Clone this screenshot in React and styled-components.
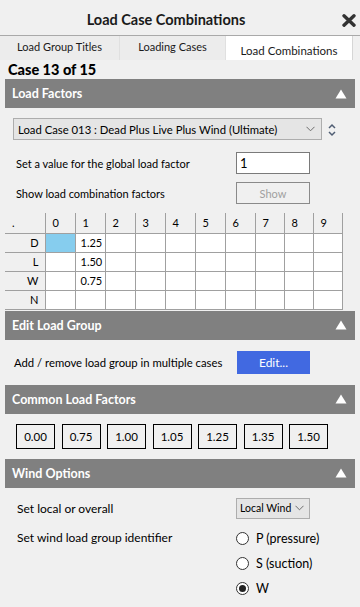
import React from 'react';
import styled, { createGlobalStyle } from 'styled-components';

const GlobalStyle = createGlobalStyle`
  html, body {
    margin: 0;
    padding: 0;
    background: #f0f0f0;
  }
  * {
    box-sizing: border-box;
  }
`;

const columns = ['0', '1', '2', '3', '4', '5', '6', '7', '8', '9'];
const colWidths = [30, 30, 30, 30, 30, 30, 30, 29, 29, 29];
const rows = [
  { name: 'D', values: { 1: '1.25' }, selected: 0 },
  { name: 'L', values: { 1: '1.50' } },
  { name: 'W', values: { 1: '0.75' } },
  { name: 'N', values: {} },
];
const commonFactors = ['0.00', '0.75', '1.00', '1.05', '1.25', '1.35', '1.50'];

function Chevron() {
  return (
    <svg width="9" height="6" viewBox="0 0 9 6">
      <path d="M0.5 0.8 L4.5 4.8 L8.5 0.8" fill="none" stroke="#6d6d6d" strokeWidth="1" />
    </svg>
  );
}

function Section({ title }) {
  return (
    <SectionHeader>
      {title}
      <svg width="12" height="10" viewBox="0 0 12 10">
        <path d="M6 0.5 L11.5 9.5 L0.5 9.5 Z" fill="#fff" />
      </svg>
    </SectionHeader>
  );
}

function App() {
  return (
    <Window>
      <GlobalStyle />
      <TitleBar>
        <Title>Load Case Combinations</Title>
        <CloseButton>
          <svg width="14" height="13" viewBox="0 0 14 13">
            <path d="M2 1.8 L12 11.2 M12 1.8 L2 11.2" stroke="#333" strokeWidth="3.4" strokeLinecap="round" />
          </svg>
        </CloseButton>
      </TitleBar>

      <TabBar>
        <Tab $width={120}>Load Group Titles</Tab>
        <Tab $width={106}>Loading Cases</Tab>
        <Tab $width={126} $active>Load Combinations</Tab>
        <TabScroll />
      </TabBar>

      <CaseLabel>Case 13 of 15</CaseLabel>

      <Section title="Load Factors" />
      <LoadFactorsBody>
        <SelectRow>
          <CaseSelect>
            <span>Load Case 013 : Dead Plus Live Plus Wind (Ultimate)</span>
            <Chevron />
          </CaseSelect>
          <Spinner>
            <svg width="8" height="14" viewBox="0 0 8 14">
              <path d="M1 5 L4 2 L7 5" fill="none" stroke="#4f5d73" strokeWidth="1.5" />
              <path d="M1 9 L4 12 L7 9" fill="none" stroke="#4f5d73" strokeWidth="1.5" />
            </svg>
          </Spinner>
        </SelectRow>
        <FieldRow $first>
          <Label>Set a value for the global load factor</Label>
          <ValueInput>1</ValueInput>
        </FieldRow>
        <FieldRow>
          <Label>Show load combination factors</Label>
          <DisabledButton>Show</DisabledButton>
        </FieldRow>
      </LoadFactorsBody>

      <Grid>
        <colgroup>
          <col style={{ width: 40 }} />
          {colWidths.map((w, i) => (
            <col key={i} style={{ width: w }} />
          ))}
        </colgroup>
        <thead>
          <tr>
            <HeadCell>.</HeadCell>
            {columns.map((c) => (
              <HeadCell key={c}>{c}</HeadCell>
            ))}
          </tr>
        </thead>
        <tbody>
          {rows.map((r) => (
            <tr key={r.name}>
              <RowHead>{r.name}</RowHead>
              {columns.map((c, i) => (
                <Cell key={c} $selected={r.selected === i}>
                  {r.values[i] || ''}
                </Cell>
              ))}
            </tr>
          ))}
        </tbody>
      </Grid>

      <Section title="Edit Load Group" />
      <EditBody>
        <Label>Add / remove load group in multiple cases</Label>
        <PrimaryButton>Edit...</PrimaryButton>
      </EditBody>

      <Section title="Common Load Factors" />
      <FactorBody>
        {commonFactors.map((f) => (
          <FactorButton key={f}>{f}</FactorButton>
        ))}
      </FactorBody>

      <Section title="Wind Options" />
      <WindBody>
        <WindRow>
          <Label>Set local or overall</Label>
          <SmallSelect>
            <span>Local Wind</span>
            <Chevron />
          </SmallSelect>
        </WindRow>
        <WindRow $top>
          <Label>Set wind load group identifier</Label>
          <RadioGroup>
            <RadioItem>
              <Radio />
              P (pressure)
            </RadioItem>
            <RadioItem>
              <Radio />
              S (suction)
            </RadioItem>
            <RadioItem>
              <Radio $checked />
              W
            </RadioItem>
          </RadioGroup>
        </WindRow>
      </WindBody>
    </Window>
  );
}

const Window = styled.div`
  width: 360px;
  height: 607px;
  overflow: hidden;
  background: #f0f0f0;
  font-family: 'Segoe UI', Lato, 'Open Sans', sans-serif;
  font-size: 11px;
  color: #000;
  display: flex;
  flex-direction: column;
`;

const TitleBar = styled.div`
  height: 36px;
  display: flex;
  align-items: center;
  justify-content: center;
  position: relative;
  border-bottom: 1px solid #a9a9a9;
`;

const Title = styled.div`
  font-size: 14.5px;
  font-weight: 700;
  color: #1a1a1a;
  margin-right: 28px;
  margin-top: 4px;
`;

const CloseButton = styled.div`
  position: absolute;
  right: 4px;
  top: 14px;
  display: flex;
`;

const TabBar = styled.div`
  height: 24px;
  display: flex;
`;

const Tab = styled.div`
  width: ${(p) => p.$width}px;
  display: flex;
  justify-content: center;
  align-items: ${(p) => (p.$active ? 'flex-end' : 'center')};
  padding-bottom: 3px;
  background: ${(p) => (p.$active ? '#ffffff' : '#ececec')};
  border-right: ${(p) => (p.$active ? 'none' : '1px solid #e0e0e0')};
  color: #1a1a1a;
  font-size: ${(p) => (p.$active ? '11.5px' : '11px')};
`;

const TabScroll = styled.div`
  flex: 1;
  border-left: 1px solid #d6d6d6;
  background: #f0f0f0;
`;

const CaseLabel = styled.div`
  height: 19px;
  padding-left: 8px;
  font-size: 14.5px;
  font-weight: 900;
  line-height: 19px;
`;

const SectionHeader = styled.div`
  margin: 0 5px;
  height: 29px;
  flex-shrink: 0;
  background: #808080;
  color: #fff;
  font-weight: 700;
  font-size: 12.5px;
  display: flex;
  align-items: center;
  justify-content: space-between;
  padding: 0 8px 0 7px;
`;

const LoadFactorsBody = styled.div`
  padding: 10px 0 0 13px;
  display: flex;
  flex-direction: column;
`;

const SelectRow = styled.div`
  display: flex;
  align-items: center;
  gap: 6px;
`;

const CaseSelect = styled.div`
  width: 309px;
  height: 22px;
  background: #e5e5e5;
  border: 1px solid #adadad;
  display: flex;
  align-items: center;
  justify-content: space-between;
  padding: 0 6px 0 4px;
  white-space: nowrap;
  font-size: 11.3px;
`;

const Spinner = styled.div`
  display: flex;
  padding-top: 1px;
`;

const FieldRow = styled.div`
  display: flex;
  align-items: center;
  justify-content: space-between;
  width: 297px;
  margin-top: ${(p) => (p.$first ? '12px' : '8px')};
  padding-left: 3px;
  height: 22px;
`;

const Label = styled.div`
  white-space: nowrap;
`;

const ValueInput = styled.div`
  width: 74px;
  height: 22px;
  background: #fff;
  border: 1px solid #7a7a7a;
  padding-left: 3px;
  font-size: 13px;
  line-height: 20px;
`;

const DisabledButton = styled.div`
  width: 74px;
  height: 22px;
  border: 1px solid #8a8a8a;
  background: #f0f0f0;
  color: #a0a0a0;
  display: flex;
  align-items: center;
  justify-content: center;
`;

const Grid = styled.table`
  margin: 9px 0 0 5px;
  border-collapse: collapse;
  table-layout: fixed;
  width: 337px;
  flex-shrink: 0;
  margin-bottom: 1px;
  td, th {
    border: 1px solid #a0a0a0;
    height: 19px;
    padding: 0 0 0 5px;
    font-weight: 400;
    text-align: left;
    white-space: nowrap;
  }
`;

const HeadCell = styled.th`
  background: #f0f0f0;
  && {
    height: 20px;
    padding-left: 7px;
    border-top: none;
    border-left: none;
  }
`;

const RowHead = styled.td`
  background: #f0f0f0;
  && {
    text-align: right;
    padding: 0 6px 0 0;
    border-left: none;
  }
`;

const Cell = styled.td`
  background: ${(p) => (p.$selected ? '#86cdee' : '#fff')};
`;

const EditBody = styled.div`
  height: 45px;
  width: 310px;
  display: flex;
  align-items: center;
  justify-content: space-between;
  padding-left: 14px;
  font-size: 11.3px;
`;

const PrimaryButton = styled.div`
  width: 73px;
  height: 23px;
  background: #4169e1;
  color: #fff;
  display: flex;
  align-items: center;
  justify-content: center;
  font-size: 12px;
`;

const FactorBody = styled.div`
  height: 45px;
  display: flex;
  align-items: center;
  padding-left: 16px;
  gap: 6.5px;
`;

const FactorButton = styled.div`
  width: 39px;
  height: 25px;
  border: 1px solid #000;
  background: #f0f0f0;
  display: flex;
  align-items: center;
  justify-content: center;
  font-size: 11.5px;
`;

const WindBody = styled.div`
  padding: 10px 0 0 17px;
  display: flex;
  flex-direction: column;
  gap: 11px;
  font-size: 12px;
`;

const WindRow = styled.div`
  display: flex;
  align-items: ${(p) => (p.$top ? 'flex-start' : 'center')};
  justify-content: space-between;
  width: 293px;
`;

const SmallSelect = styled.div`
  width: 74px;
  height: 21px;
  background: #e5e5e5;
  border: 1px solid #adadad;
  display: flex;
  align-items: center;
  justify-content: space-between;
  padding: 0 5px 0 3px;
  white-space: nowrap;
  font-size: 10.5px;
`;

const RadioGroup = styled.div`
  width: 74px;
  display: flex;
  flex-direction: column;
  gap: 7px;
  white-space: nowrap;
  font-size: 12.5px;
`;

const RadioItem = styled.div`
  display: flex;
  align-items: center;
  gap: 7px;
  height: 18px;
`;

const Radio = styled.span`
  width: 13px;
  height: 13px;
  flex-shrink: 0;
  border-radius: 50%;
  border: 1px solid #333;
  background: #fff;
  display: flex;
  align-items: center;
  justify-content: center;
  &::after {
    content: '';
    width: 7px;
    height: 7px;
    border-radius: 50%;
    background: ${(p) => (p.$checked ? '#222' : 'transparent')};
  }
`;

export default App;
